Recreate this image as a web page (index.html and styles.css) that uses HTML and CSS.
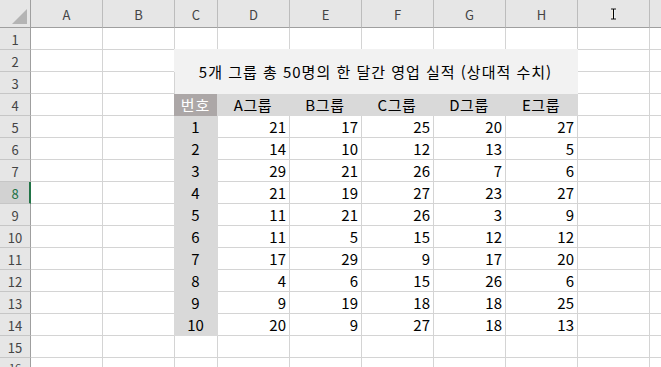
FILE: index.html
```html
<!DOCTYPE html>
<html lang="ko">
<head>
<meta charset="utf-8">
<link rel="stylesheet" href="styles.css">
</head>
<body>
<div class="sheet">
  <div class="corner"><svg width="15" height="15" viewBox="0 0 15 15"><polygon points="0,15 15,15 15,0" fill="#b4b4b4"/></svg></div>
  <div class="ch">A</div><div class="ch">B</div><div class="ch">C</div><div class="ch">D</div><div class="ch">E</div><div class="ch">F</div><div class="ch">G</div><div class="ch">H</div>
  <div class="ch cursor-host">I<svg class="ibeam" width="7" height="12" viewBox="0 0 7 12"><path d="M1 1h5M3.5 1v10M1 11h5" stroke="#fff" stroke-width="2.4" fill="none"/><path d="M1 1h5M3.5 1v10M1 11h5" stroke="#000" stroke-width="1" fill="none"/></svg></div>
  <div class="ch last"></div>

  <!-- row 1 -->
  <div class="rh">1</div><div class="c"></div><div class="c"></div><div class="c"></div><div class="c"></div><div class="c"></div><div class="c"></div><div class="c"></div><div class="c"></div><div class="c"></div><div class="c last"></div>
  <!-- row 2 -->
  <div class="rh">2</div><div class="c"></div><div class="c"></div>
  <div class="title">5개 그룹 총 50명의 한 달간 영업 실적 (상대적 수치)</div>
  <div class="c"></div><div class="c last"></div>
  <!-- row 3 -->
  <div class="rh">3</div><div class="c"></div><div class="c"></div><div class="c"></div><div class="c last"></div>
  <!-- row 4 -->
  <div class="rh">4</div><div class="c"></div><div class="c"></div>
  <div class="c idx-head">번호</div><div class="c grp">A그룹</div><div class="c grp">B그룹</div><div class="c grp">C그룹</div><div class="c grp">D그룹</div><div class="c grp">E그룹</div>
  <div class="c"></div><div class="c last"></div>
  <!-- rows 5-14 -->
  <div class="rh">5</div><div class="c"></div><div class="c"></div><div class="c idx">1</div><div class="c n">21</div><div class="c n">17</div><div class="c n">25</div><div class="c n">20</div><div class="c n">27</div><div class="c"></div><div class="c last"></div>
  <div class="rh">6</div><div class="c"></div><div class="c"></div><div class="c idx">2</div><div class="c n">14</div><div class="c n">10</div><div class="c n">12</div><div class="c n">13</div><div class="c n">5</div><div class="c"></div><div class="c last"></div>
  <div class="rh">7</div><div class="c"></div><div class="c"></div><div class="c idx">3</div><div class="c n">29</div><div class="c n">21</div><div class="c n">26</div><div class="c n">7</div><div class="c n">6</div><div class="c"></div><div class="c last"></div>
  <div class="rh sel">8</div><div class="c"></div><div class="c"></div><div class="c idx">4</div><div class="c n">21</div><div class="c n">19</div><div class="c n">27</div><div class="c n">23</div><div class="c n">27</div><div class="c"></div><div class="c last"></div>
  <div class="rh">9</div><div class="c"></div><div class="c"></div><div class="c idx">5</div><div class="c n">11</div><div class="c n">21</div><div class="c n">26</div><div class="c n">3</div><div class="c n">9</div><div class="c"></div><div class="c last"></div>
  <div class="rh">10</div><div class="c"></div><div class="c"></div><div class="c idx">6</div><div class="c n">11</div><div class="c n">5</div><div class="c n">15</div><div class="c n">12</div><div class="c n">12</div><div class="c"></div><div class="c last"></div>
  <div class="rh">11</div><div class="c"></div><div class="c"></div><div class="c idx">7</div><div class="c n">17</div><div class="c n">29</div><div class="c n">9</div><div class="c n">17</div><div class="c n">20</div><div class="c"></div><div class="c last"></div>
  <div class="rh">12</div><div class="c"></div><div class="c"></div><div class="c idx">8</div><div class="c n">4</div><div class="c n">6</div><div class="c n">15</div><div class="c n">26</div><div class="c n">6</div><div class="c"></div><div class="c last"></div>
  <div class="rh">13</div><div class="c"></div><div class="c"></div><div class="c idx">9</div><div class="c n">9</div><div class="c n">19</div><div class="c n">18</div><div class="c n">18</div><div class="c n">25</div><div class="c"></div><div class="c last"></div>
  <div class="rh">14</div><div class="c"></div><div class="c"></div><div class="c idx">10</div><div class="c n">20</div><div class="c n">9</div><div class="c n">27</div><div class="c n">18</div><div class="c n">13</div><div class="c"></div><div class="c last"></div>
  <div class="rh">15</div><div class="c"></div><div class="c"></div><div class="c"></div><div class="c"></div><div class="c"></div><div class="c"></div><div class="c"></div><div class="c"></div><div class="c"></div><div class="c last"></div>
  <div class="rh rh-partial">16</div><div class="c"></div><div class="c"></div><div class="c"></div><div class="c"></div><div class="c"></div><div class="c"></div><div class="c"></div><div class="c"></div><div class="c"></div><div class="c last"></div>
</div>
</body>
</html>
```
FILE: styles.css
```css
html, body {
  margin: 0;
  padding: 0;
  background: #ffffff;
  overflow: hidden;
}
.sheet {
  display: grid;
  grid-template-columns: 31px 72px 72px 43px 72px 72px 72px 72px 72px 72px 1fr;
  grid-template-rows: 28px repeat(15, 22px) 10px;
  width: 661px;
  height: 367px;
  overflow: hidden;
  font-family: "Noto Sans CJK KR", "Noto Sans", sans-serif;
  color: #000;
}
.sheet > div {
  box-sizing: border-box;
  min-width: 0;
}
.corner {
  background: #e6e6e6;
  border-right: 1px solid #9f9f9f;
  border-bottom: 1px solid #9f9f9f;
  display: flex;
  align-items: flex-end;
  justify-content: flex-end;
  padding: 0 3px 3px 0;
}
.corner svg { display: block; }
.ch {
  background: #e6e6e6;
  border-right: 1px solid #bcbcbc;
  border-bottom: 1px solid #9f9f9f;
  display: flex;
  align-items: center;
  justify-content: center;
  font-size: 13px;
  color: #444;
  padding-top: 1px;
}
.ch.last { border-right: none; }
.cursor-host { position: relative; }
.ibeam {
  position: absolute;
  left: 32px;
  top: 8px;
}
.rh {
  background: #e6e6e6;
  border-right: 1px solid #9f9f9f;
  border-bottom: 1px solid #c6c6c6;
  display: flex;
  align-items: center;
  justify-content: center;
  font-size: 13px;
  color: #444;
  padding-top: 1px;
}
.rh-partial {
  align-items: flex-start;
  padding-top: 4px;
  font-size: 11px;
  line-height: 11px;
  overflow: hidden;
  border-bottom: none;
}
.rh.sel {
  background: #d2d2d2;
  color: #217346;
  border-right: 2px solid #217346;
  padding-left: 1px;
}
.c {
  border-right: 1px solid #d4d4d4;
  border-bottom: 1px solid #d4d4d4;
  font-size: 15px;
  line-height: 21px;
  white-space: nowrap;
}
.c.last { border-right: none; }
.title {
  grid-column: 4 / 10;
  grid-row: span 2;
  margin: -1px 0 0 -1px;
  background: #f2f2f2;
  border-right: 1px solid #f2f2f2;
  border-bottom: 1px solid #f2f2f2;
  display: flex;
  align-items: center;
  justify-content: center;
  font-size: 15px;
  padding-top: 1px;
  letter-spacing: 1px;
}
.idx-head {
  margin-left: -1px;
  background: #aca7a7;
  border-color: #aca7a7;
  color: #fff;
  text-align: center;
  letter-spacing: 1px;
}
.grp {
  margin-left: -1px;
  background: #d9d9d9;
  border-color: #d9d9d9;
  text-align: center;
  letter-spacing: 0.6px;
}
.idx {
  margin-left: -1px;
  background: #d9d9d9;
  border-color: #d9d9d9;
  text-align: center;
}
.n {
  text-align: right;
  padding-right: 3px;
}
```
